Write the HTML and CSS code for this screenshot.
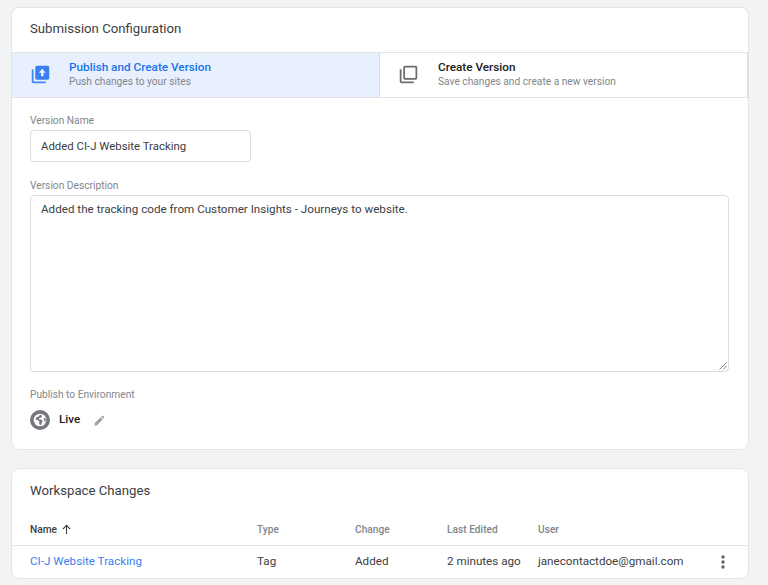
FILE: index.html
```html
<!DOCTYPE html>
<html lang="en">
<head>
<meta charset="utf-8">
<title>Submission Configuration</title>
<link rel="stylesheet" href="styles.css">
</head>
<body>
<main class="page">
  <section class="card config">
    <h2 class="card-title">Submission Configuration</h2>
    <div class="tabs">
      <div class="tab tab-active">
        <svg class="tab-icon" viewBox="0 0 24 24" width="21" height="21"><path fill="#4285f4" d="M4 6H2v14c0 1.100.9 2 2 2h14v-2H4V6z"/><path fill="#3b7ff0" fill-rule="evenodd" d="M20 2H8c-1.100 0-2 .9-2 2v12c0 1.100.9 2 2 2h12c1.100 0 2-.9 2-2V4c0-1.100-.9-2-2-2zM14 5.500l4 4.500h-2.500v4h-3v-4H10l4-4.500z"/></svg>
        <div class="tab-text">
          <div class="tab-title">Publish and Create Version</div>
          <div class="tab-sub">Push changes to your sites</div>
        </div>
      </div>
      <div class="tab">
        <svg class="tab-icon" viewBox="0 0 24 24" width="21" height="21"><path fill="#6a6d71" d="M4 6H2v14c0 1.100.9 2 2 2h14v-2H4V6zm16-4H8c-1.100 0-2 .9-2 2v12c0 1.100.9 2 2 2h12c1.100 0 2-.9 2-2V4c0-1.100-.9-2-2-2zm0 14H8V4h12v12z"/></svg>
        <div class="tab-text">
          <div class="tab-title">Create Version</div>
          <div class="tab-sub">Save changes and create a new version</div>
        </div>
      </div>
    </div>
    <div class="form">
      <div class="field field-name">
        <label class="label">Version Name</label>
        <div class="input input-name">Added CI-J Website Tracking</div>
      </div>
      <div class="field field-desc">
        <label class="label">Version Description</label>
        <div class="input textarea">Added the tracking code from Customer Insights - Journeys to website.
          <svg class="grip" viewBox="0 0 8 8" width="8" height="8"><path stroke="#80868b" stroke-width="1" fill="none" d="M0.500 7.500L7.500 0.500M4 7.500L7.500 4"/></svg>
        </div>
      </div>
      <div class="env">
        <div class="label">Publish to Environment</div>
        <div class="env-row">
          <svg class="globe" viewBox="0 0 20 20" width="20" height="20"><circle cx="10" cy="10" r="10" fill="#74777b"/><circle cx="10" cy="10" r="6.300" fill="#fff"/><path fill="#74777b" d="M11 4.400c-1.200.5-2 1.300-2.400 2.200l-2.200.6-1 2.400 2.300.4 1.700 1.500-.3 1.800 1 2 1.300-.9.300-2 1.200-1.500-2.400-1.600-1.500.1.200-1.300 1.900-.4.900-1.400z"/><path fill="#74777b" d="M13.500 8.400l2-.4.300 2.700-1.300 1.400-.4-2z"/></svg>
          <span class="env-name">Live</span>
          <svg class="pencil" viewBox="0 0 24 24" width="13" height="13"><path fill="#9aa0a6" d="M3 17.250V21h3.750L17.810 9.940l-3.750-3.750L3 17.250zM20.710 7.040a1 1 0 0 0 0-1.410l-2.340-2.340a1 1 0 0 0-1.410 0l-1.830 1.830 3.750 3.750 1.830-1.830z"/></svg>
        </div>
      </div>
    </div>
  </section>
  <section class="card changes">
    <h2 class="card-title">Workspace Changes</h2>
    <div class="row row-head">
      <div class="cell cell-name head-sorted">Name <svg class="sort" viewBox="0 0 12 12" width="11" height="11"><path fill="none" stroke="#3c4043" stroke-width="1.200" d="M6 11V1.500M2 5.500l4-4 4 4"/></svg></div>
      <div class="cell cell-type">Type</div>
      <div class="cell cell-change">Change</div>
      <div class="cell cell-edited">Last Edited</div>
      <div class="cell cell-user">User</div>
    </div>
    <div class="row row-body">
      <div class="cell cell-name"><a class="link" href="#">CI-J Website Tracking</a></div>
      <div class="cell cell-type">Tag</div>
      <div class="cell cell-change">Added</div>
      <div class="cell cell-edited">2 minutes ago</div>
      <div class="cell cell-user">janecontactdoe@gmail.com</div>
      <svg class="more" viewBox="0 0 4 14" width="4" height="14"><circle cx="2" cy="2" r="1.700" fill="#5f6368"/><circle cx="2" cy="7" r="1.700" fill="#5f6368"/><circle cx="2" cy="12" r="1.700" fill="#5f6368"/></svg>
    </div>
  </section>
</main>
</body>
</html>
```
FILE: styles.css
```css
* { box-sizing: border-box; }
html, body { margin: 0; height: 100%; }
body {
  background: #f1f3f4;
  font-family: Roboto, "Liberation Sans", sans-serif;
  color: #3c4043;
  overflow: hidden;
}
.page {
  width: 768px;
  padding: 7px 19px 0 11px;
  display: flex;
  flex-direction: column;
  gap: 18px;
}
.card {
  background: #fff;
  border: 1px solid #e2e4e6;
  border-radius: 8px;
  overflow: hidden;
}
.config { height: 443px; }
.changes { height: 111px; }
.card-title {
  margin: 0;
  padding: 0 18px;
  height: 44px;
  line-height: 42px;
  font-family: Roboto, sans-serif;
  font-size: 13.200px;
  font-weight: 400;
  color: #3c4043;
}
.tabs {
  display: flex;
  height: 46px;
  border-top: 1px solid #e2e4e6;
  border-bottom: 1px solid #e2e4e6;
}
.tab {
  width: 368px;
  display: flex;
  align-items: center;
  padding: 0 0 2px 18px;
  gap: 18px;
  border-right: 1px solid #dadce0;
}
.tab:first-child { flex: none; }
.tab-active { background: #e8f0fe; }
.tab + .tab { flex: 1; padding-left: 18px; gap: 19px; }
.tab-icon { flex: none; }
.tab-title {
  font-size: 11.750px;
  font-weight: 500;
  line-height: 15px;
  color: #202124;
}
.tab-active .tab-title { color: #1a73e8; }
.tab-sub {
  font-size: 10.200px;
  line-height: 13px;
  color: #80868b;
}
.form { padding: 16px 19px 0 18px; }
.label {
  display: block;
  font-size: 10.200px;
  line-height: 14px;
  color: #80868b;
}
.field-name { width: 221px; }
.input {
  margin-top: 2px;
  border: 1px solid #dadce0;
  border-radius: 4px;
  height: 32px;
  padding: 0 10px;
  line-height: 30px;
  font-size: 11.650px;
  color: #3c4043;
  background: #fff;
}
.input-name { font-size: 11.400px; }
.field-desc { margin-top: 17px; }
.textarea {
  position: relative;
  height: 177px;
  line-height: 27px;
}
.grip { position: absolute; right: 1px; bottom: 1px; }
.env { margin-top: 16px; }
.env-row {
  display: flex;
  align-items: center;
  margin-top: 8px;
  height: 20px;
}
.env-name {
  margin-left: 9px;
  font-size: 11.650px;
  font-weight: 500;
  color: #202124;
  position: relative;
  top: -1px;
}
.pencil { margin-left: 13px; }
.row {
  display: flex;
  align-items: center;
  padding-left: 18px;
  position: relative;
}
.changes .card-title { line-height: 43px; }
.row-head {
  height: 33px;
  font-size: 10.200px;
  font-weight: 500;
  color: #80868b;
  border-bottom: 1px solid #e2e4e6;
}
.row-body { height: 31px; padding-bottom: 2px; font-size: 11.650px; color: #3c4043; }
.cell-name { width: 227px; flex: none; }
.cell-type { width: 98px; flex: none; }
.cell-change { width: 92px; flex: none; }
.cell-edited { width: 91px; flex: none; }
.head-sorted { color: #3c4043; display: flex; align-items: center; gap: 4px; }
.sort { flex: none; }
.link { color: #3b7ff0; text-decoration: none; }
.more { position: absolute; left: 709px; top: 9px; }
```
